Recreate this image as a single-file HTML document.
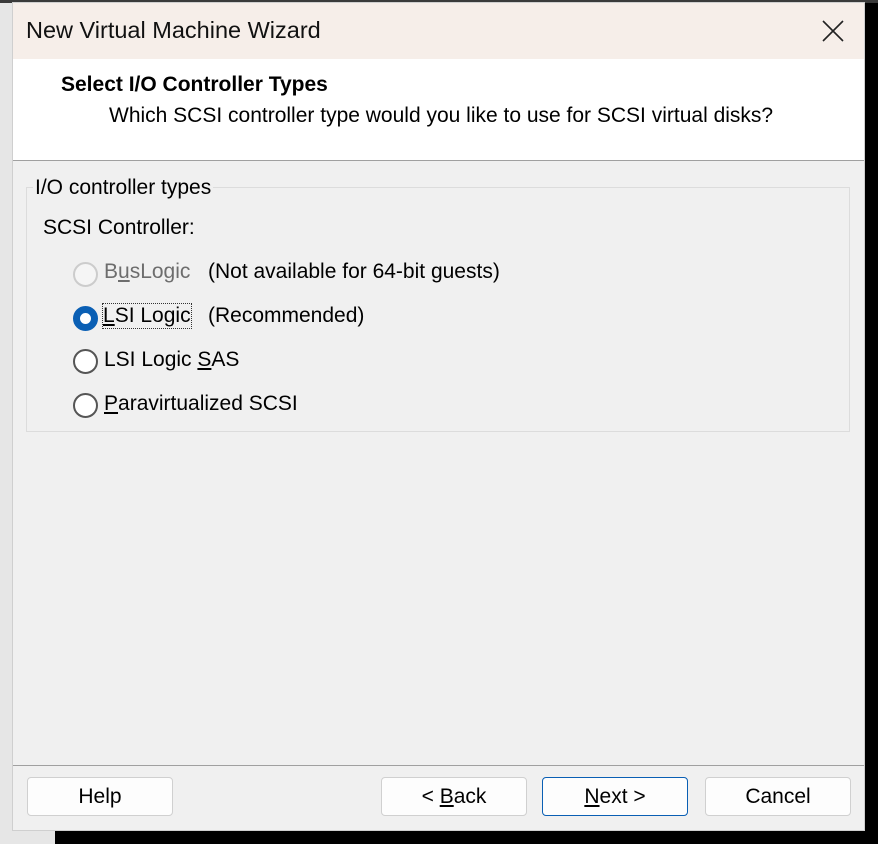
<!DOCTYPE html>
<html><head><style>
body{margin:0;width:878px;height:844px;background:#000;position:relative;overflow:hidden;font-family:"Segoe UI","Liberation Sans",sans-serif;}
.lg{position:absolute;left:0;top:0;width:55px;height:844px;background:#e6e6e6}
.tg{position:absolute;left:0;top:0;width:878px;height:3px;background:#3a3a3a}
.win{position:absolute;left:12px;top:2px;width:853px;height:829px;background:#f0f0f0;border:1px solid #cfcfcf;box-sizing:border-box}
.title{position:absolute;left:0;top:0;width:100%;height:56px;background:#f6eee9}
.title span{position:absolute;left:13px;top:14px;font-size:23.5px;color:#111}
.hdr{position:absolute;left:0;top:56px;width:100%;height:101px;background:#fff;border-bottom:1px solid #a0a0a0}
.t{position:absolute;font-size:21px;color:#000;white-space:nowrap}
.grp{position:absolute;left:13px;top:184px;width:824px;height:245px;border:1px solid #dcdcdc;box-sizing:border-box}
.radio{position:absolute;width:25px;height:25px;border-radius:50%;border:2px solid #555;box-sizing:border-box;background:#fff}
.btn{position:absolute;top:777px;width:146px;height:39px;background:#fdfdfd;border:1px solid #d0d0d0;border-radius:4px;box-sizing:border-box;text-align:center;line-height:37px;font-size:21px}
u{text-decoration:underline}
</style></head><body>
<div class="lg"></div><div class="tg"></div>
<div class="win">
<div class="title"><span>New Virtual Machine Wizard</span>
<svg style="position:absolute;left:809px;top:17px" width="22" height="22"><path d="M1 1L21 21M21 1L1 21" stroke="#222" stroke-width="1.6"/></svg></div>
<div class="hdr">
<div class="t" style="left:48px;top:14px;font-weight:bold">Select I/O Controller Types</div>
<div class="t" style="left:96px;top:45px">Which SCSI controller type would you like to use for SCSI virtual disks?</div>
</div>
<div class="grp"></div>
<div class="t" style="left:20px;top:173px;background:#f0f0f0;padding:0 2px">I/O controller types</div>
<div class="t" style="left:30px;top:213px">SCSI Controller:</div>
<div class="radio" style="left:60px;top:259px;border-color:#ccc;background:#f5f5f5"></div>
<div class="t" style="left:91px;top:257px;color:#6d6d6d">B<u>u</u>sLogic</div>
<div class="t" style="left:195px;top:257px">(Not available for 64-bit guests)</div>
<div class="radio" style="left:60px;top:303px;border:7px solid #0a5fb4"></div>
<div class="t" style="left:90px;top:301px;outline:1px dotted #333"><u>L</u>SI Logic</div>
<div class="t" style="left:195px;top:301px">(Recommended)</div>
<div class="radio" style="left:60px;top:346px"></div>
<div class="t" style="left:91px;top:345px">LSI Logic <u>S</u>AS</div>
<div class="radio" style="left:60px;top:390px"></div>
<div class="t" style="left:91px;top:389px"><u>P</u>aravirtualized SCSI</div>
<div style="position:absolute;left:0;top:762px;width:100%;height:1px;background:#a0a0a0"></div>
</div>
<div class="btn" style="left:27px">Help</div>
<div class="btn" style="left:381px">&lt; <u>B</u>ack</div>
<div class="btn" style="left:542px;border-color:#0a5fb4"><u>N</u>ext &gt;</div>
<div class="btn" style="left:705px">Cancel</div>
</body></html>
